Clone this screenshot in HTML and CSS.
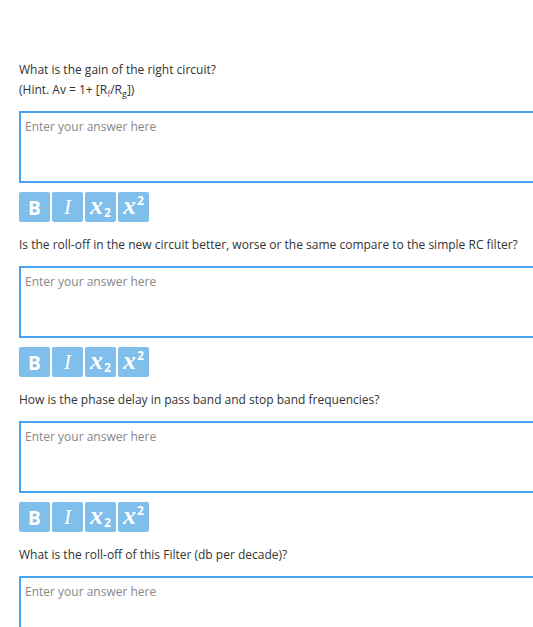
FILE: index.html
```html
<!DOCTYPE html>
<html>
<head>
<meta charset="utf-8">
<link rel="stylesheet" href="styles.css">
</head>
<body>
<div class="page">
  <div class="question">
    <p class="qtext">What is the gain of the right circuit?</p>
    <p class="qtext">(Hint. Av = 1+ [R<sub class="f">f</sub>/R<sub>g</sub>])</p>
    <div class="answer"><span class="ph">Enter your answer here</span></div>
    <div class="toolbar">
      <span class="btn b"><span>B</span></span>
      <span class="btn i"><span>I</span></span>
      <span class="btn x"><span>x<sub>2</sub></span></span>
      <span class="btn x"><span>x<sup>2</sup></span></span>
    </div>
  </div>
  <div class="question">
    <p class="qtext">Is the roll-off in the new circuit better, worse or the same compare to the simple RC filter?</p>
    <div class="answer"><span class="ph">Enter your answer here</span></div>
    <div class="toolbar">
      <span class="btn b"><span>B</span></span>
      <span class="btn i"><span>I</span></span>
      <span class="btn x"><span>x<sub>2</sub></span></span>
      <span class="btn x"><span>x<sup>2</sup></span></span>
    </div>
  </div>
  <div class="question">
    <p class="qtext">How is the phase delay in pass band and stop band frequencies?</p>
    <div class="answer"><span class="ph">Enter your answer here</span></div>
    <div class="toolbar">
      <span class="btn b"><span>B</span></span>
      <span class="btn i"><span>I</span></span>
      <span class="btn x"><span>x<sub>2</sub></span></span>
      <span class="btn x"><span>x<sup>2</sup></span></span>
    </div>
  </div>
  <div class="question">
    <p class="qtext">What is the roll-off of this Filter (db per decade)?</p>
    <div class="answer"><span class="ph">Enter your answer here</span></div>
  </div>
</div>
</body>
</html>
```

FILE: styles.css
```css
html, body {
  margin: 0;
  padding: 0;
  background: #ffffff;
  overflow: hidden;
}
.page {
  padding: 60px 0 0 19px;
  font-family: "Open Sans", "Liberation Sans", sans-serif;
  font-size: 12px;
  color: #333333;
}
.question {
  display: flex;
  flex-direction: column;
  margin-bottom: 13px;
}
.qtext {
  margin: 0;
  line-height: 20px;
  white-space: nowrap;
}
.qtext sub {
  font-size: 9px;
  line-height: 0;
  vertical-align: -3px;
}
.qtext sub.f {
  color: #8a4a86;
}
.answer {
  margin-top: 11px;
  width: 540px;
  height: 72px;
  box-sizing: border-box;
  border: 2px solid #47a3f3;
  padding: 4px 4px;
}
.ph {
  color: #888888;
  line-height: 20px;
}
.toolbar {
  display: flex;
  gap: 2px;
  margin-top: 9px;
}
.btn {
  width: 31px;
  height: 30px;
  box-sizing: border-box;
  background: #80bfeb;
  border-radius: 2px;
  color: #ffffff;
  display: flex;
  align-items: center;
  justify-content: center;
  line-height: 1;
}
.btn.b {
  font-family: "Open Sans", "Liberation Sans", sans-serif;
  font-weight: 700;
  font-size: 19px;
  padding-top: 2px;
}
.btn.i {
  font-family: "Liberation Serif", "DejaVu Serif", serif;
  font-style: italic;
  font-size: 21px;
  padding-top: 1px;
}
.btn.x {
  font-family: "Liberation Serif", "DejaVu Serif", serif;
  font-style: italic;
  font-weight: 700;
  font-size: 26px;
  padding-bottom: 3px;
}
.btn.x sub, .btn.x sup {
  font-family: "Open Sans", "Liberation Sans", sans-serif;
  font-style: normal;
  font-weight: 700;
  font-size: 12px;
  line-height: 0;
  margin-left: 1px;
}
.btn.x sub {
  vertical-align: -3px;
}
.btn.x sup {
  vertical-align: 9px;
}
```
